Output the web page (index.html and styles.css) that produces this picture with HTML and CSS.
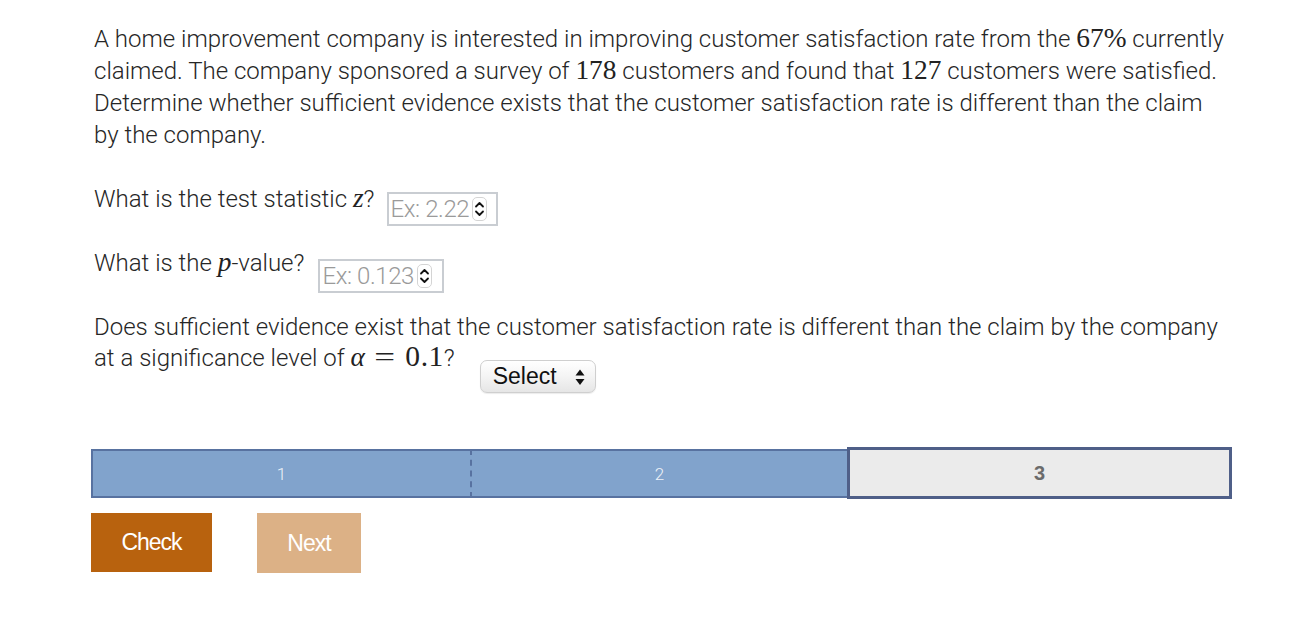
FILE: index.html
```html
<!DOCTYPE html>
<html>
<head>
<meta charset="utf-8">
<link rel="stylesheet" href="styles.css">
</head>
<body>
<div class="page">
  <p class="intro">A home improvement company is interested in improving customer satisfaction rate from the <span class="m">67%</span> currently claimed. The company sponsored a survey of <span class="m">178</span> customers and found that <span class="m">127</span> customers were satisfied. Determine whether sufficient evidence exists that the customer satisfaction rate is different than the claim by the company.</p>

  <div class="q q1">
    <span class="label">What is the test statistic <span class="m mi">z</span>?</span>
    <div class="field field-z">
      <span class="ph">Ex: 2.22</span>
      <span class="spin"><svg width="15" height="24" viewBox="0 0 15 24"><rect x="0.5" y="0.5" width="14" height="23" rx="4.5" fill="#fff" stroke="#d4d4d4"/><path d="M4 9.5 L7.5 6 L11 9.5" fill="none" stroke="#111" stroke-width="1.8" stroke-linecap="round" stroke-linejoin="round"/><path d="M4 14.5 L7.5 18 L11 14.5" fill="none" stroke="#111" stroke-width="1.8" stroke-linecap="round" stroke-linejoin="round"/></svg></span>
    </div>
  </div>

  <div class="q q2">
    <span class="label">What is the <span class="m mi">p</span>-value?</span>
    <div class="field field-p">
      <span class="ph">Ex: 0.123</span>
      <span class="spin"><svg width="15" height="24" viewBox="0 0 15 24"><rect x="0.5" y="0.5" width="14" height="23" rx="4.5" fill="#fff" stroke="#d4d4d4"/><path d="M4 9.5 L7.5 6 L11 9.5" fill="none" stroke="#111" stroke-width="1.8" stroke-linecap="round" stroke-linejoin="round"/><path d="M4 14.5 L7.5 18 L11 14.5" fill="none" stroke="#111" stroke-width="1.8" stroke-linecap="round" stroke-linejoin="round"/></svg></span>
    </div>
  </div>

  <p class="q3">Does sufficient evidence exist that the customer satisfaction rate is different than the claim by the company at a significance level of <span class="m"><span class="mi">α</span><span class="rel">=</span><span class="num">0.1</span></span>?<span class="select">Select <svg width="12" height="22" viewBox="0 0 12 22"><path d="M6 3.5 L10.5 9.5 L1.5 9.5 Z" fill="#111"/><path d="M6 19 L10.5 13 L1.5 13 Z" fill="#111"/></svg></span></p>

  <div class="progress">
    <div class="seg seg1">1</div>
    <div class="seg seg2">2</div>
    <div class="seg seg3">3</div>
  </div>

  <div class="buttons">
    <div class="btn btn-check">Check</div>
    <div class="btn btn-next">Next</div>
  </div>
</div>
</body>
</html>
```
FILE: styles.css
```css
html, body {
  margin: 0;
  padding: 0;
  background: #fff;
}
.page {
  padding: 23px 0 0 91px;
  width: 1141px;
  font-family: Roboto, "Noto Sans", sans-serif;
  font-weight: 300;
  font-size: 24px;
  color: #262626;
}
.intro {
  margin: 0;
  padding: 0 3px;
  line-height: 32px;
}
.m {
  font-family: "Liberation Serif", "DejaVu Serif", serif;
  font-size: 1.14em;
  font-weight: 400;
  color: #222;
  line-height: 0;
}
.mi {
  font-style: italic;
}
.rel {
  display: inline-block;
  margin: 0 13px 0 12px;
  transform: scaleX(1.35);
}
.num {
  font-size: 1.08em;
  letter-spacing: 0.5px;
}
.q {
  display: flex;
  align-items: flex-start;
  padding-left: 3px;
  line-height: 32px;
}
.q1 { margin-top: 32px; }
.q2 { margin-top: 21px; }
.label {
  white-space: nowrap;
}
.field {
  box-sizing: border-box;
  height: 34px;
  border: 2px solid #c9cdd2;
  background: #fff;
  display: flex;
  align-items: center;
  padding: 0 2px 0 2px;
  line-height: 30px;
}
.field-z {
  width: 111px;
  margin-left: 12px;
  margin-top: 9px;
}
.field-p {
  width: 126px;
  margin-left: 14px;
  margin-top: 12px;
}
.ph {
  color: #9a9a9a;
  letter-spacing: -0.4px;
  white-space: nowrap;
}
.spin {
  display: flex;
  align-items: center;
  margin-left: 3px;
}
.spin svg {
  display: block;
}
.q3 {
  margin: 19px 0 0 0;
  padding: 0 3px;
  line-height: 31px;
}
.select {
  box-sizing: border-box;
  display: inline-flex;
  align-items: center;
  justify-content: space-between;
  vertical-align: top;
  margin: 17px 0 0 25px;
  width: 116px;
  height: 33px;
  padding: 0 9px 0 12px;
  border: 1px solid #cfcfcf;
  border-radius: 7px;
  background: linear-gradient(#ffffff, #f4f4f4 50%, #e6e6e6);
  box-shadow: 0 1px 1px rgba(0,0,0,0.08);
  font-family: "Liberation Sans", Arial, sans-serif;
  font-weight: 400;
  font-size: 23px;
  color: #111;
  line-height: 31px;
}
.select svg {
  display: block;
}
.progress {
  display: flex;
  align-items: flex-start;
  margin-top: 54px;
}
.seg {
  box-sizing: border-box;
  display: flex;
  align-items: center;
  justify-content: center;
  font-size: 17px;
}
.seg1, .seg2 {
  height: 49px;
  margin-top: 2px;
  background: #81a3cc;
  border-top: 2px solid #5872a0;
  border-bottom: 2px solid #5872a0;
  color: #eef2f8;
}
.seg1 {
  width: 379px;
  border-left: 2px solid #5872a0;
}
.seg2 {
  width: 377px;
  border-left: 2px dashed #5872a0;
}
.seg3 {
  width: 385px;
  height: 52px;
  background: #ebebeb;
  border: 3px solid #4f5f88;
  font-family: "Liberation Sans", Arial, sans-serif;
  font-weight: 700;
  font-size: 20px;
  color: #6b6b6b;
}
.buttons {
  display: flex;
  align-items: flex-start;
  margin-top: 14px;
  gap: 45px;
}
.btn {
  display: flex;
  align-items: center;
  justify-content: center;
  font-family: "Liberation Sans", Arial, sans-serif;
  font-weight: 400;
  font-size: 23px;
  letter-spacing: -1px;
  color: #fff;
}
.btn-check {
  width: 121px;
  height: 59px;
  background: #b8620e;
}
.btn-next {
  width: 104px;
  height: 60px;
  background: #dcb186;
}
```
